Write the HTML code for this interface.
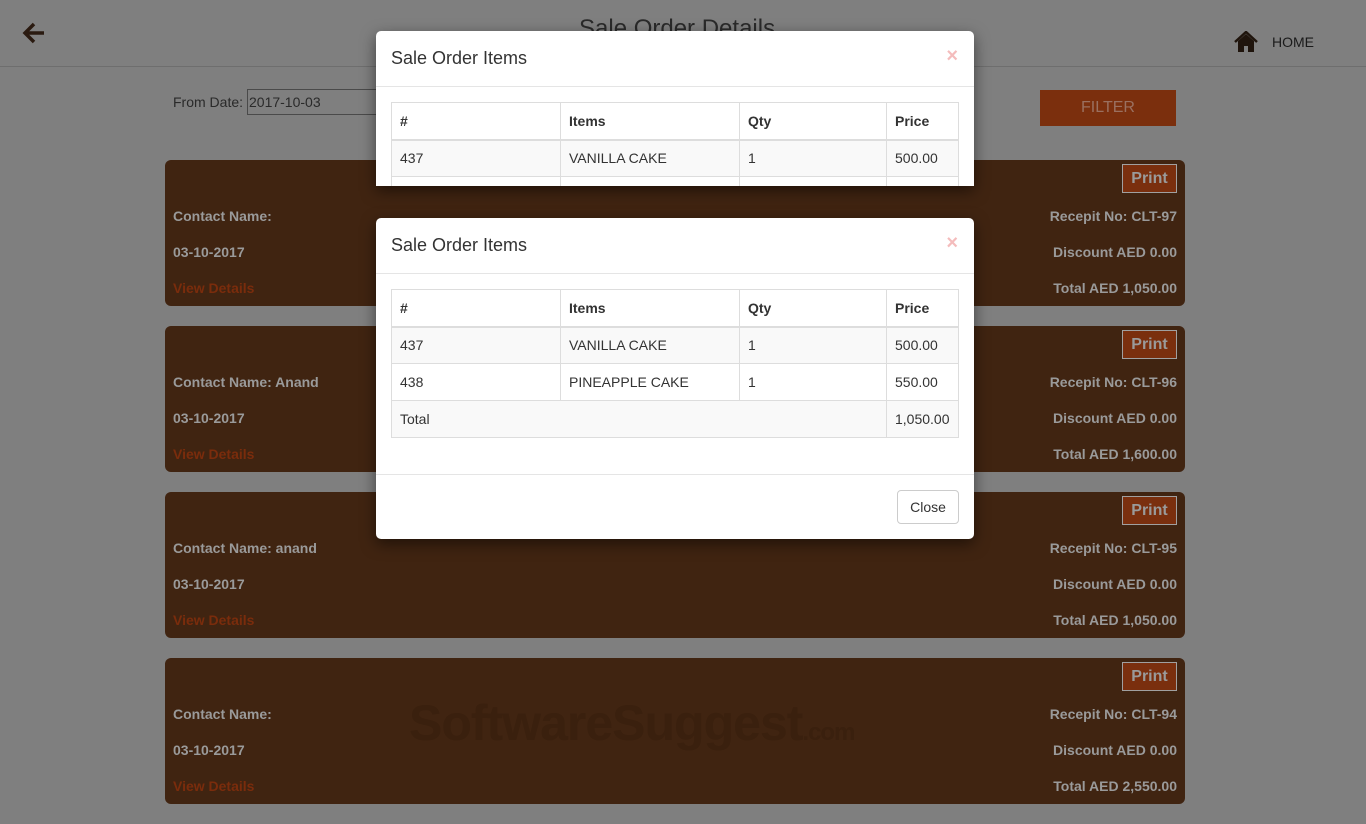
<!DOCTYPE html>
<html><head><style>
*{margin:0;padding:0;box-sizing:border-box}
body{width:1366px;height:824px;overflow:hidden;background:#7f7f7f;font-family:"Liberation Sans",sans-serif;position:relative}
.a{position:absolute}
.card{position:absolute;left:165px;width:1020px;height:146px;background:#402411;border-radius:6px;font-weight:bold;font-size:14px;color:#9a9a9a}
.card .l{position:absolute;left:8px}
.card .r{position:absolute;right:8px}
.card .vd{color:#7a2c0c}
.print{position:absolute;right:8px;top:4px;width:55px;height:29px;background:#7a2f0e;border:1px solid #a0a0a0;color:#9a9a9a;font-size:16px;text-align:center;line-height:27px}
.modal{position:absolute;left:376px;width:598px;background:#fff;border-radius:5px;overflow:hidden;box-shadow:0 5px 15px rgba(0,0,0,.5)}
.mh{height:56px;border-bottom:1px solid #e5e5e5;font-size:18px;color:#333;padding:17px 15px 0;position:relative}
.x{position:absolute;right:16px;top:14px;color:#f4bcbc;font-size:20px;font-weight:bold}
table{border-collapse:collapse;margin:15px 15px 0;width:568px;font-size:14px;color:#333}
td,th{border:1px solid #ddd;height:37px;padding:0 8px;text-align:left}
th{border-bottom:2px solid #ddd;font-weight:bold}
tr.s td{background:#f9f9f9}
</style></head><body>
<svg class="a" style="left:22px;top:22px" width="24" height="22" viewBox="0 0 24 22"><path d="M22 11H4M12 2L3 11l9 9" stroke="#2a1a10" stroke-width="3.5" fill="none"/></svg>
<div class="a" style="left:579px;top:15px;font-size:24px;color:#2a2a2a">Sale Order Details</div>
<svg class="a" style="left:1234px;top:31px" width="24" height="22" viewBox="0 0 24 22"><path d="M1 11L12 1l11 10" stroke="#1f140c" stroke-width="2.5" fill="none"/><path d="M4 10v11h6v-6h4v6h6V10L12 3z" fill="#1f140c"/></svg>
<div class="a" style="left:1272px;top:34px;font-size:14px;color:#1a1a1a">HOME</div>
<div class="a" style="left:0;top:66px;width:1366px;height:1px;background:#6e6e6e"></div>
<div class="a" style="left:173px;top:94px;font-size:14px;color:#2a2a2a">From Date:</div>
<div class="a" style="left:247px;top:89px;width:140px;height:26px;border:1px solid #4a4a4a;font-size:14px;color:#2a2a2a;padding:4px 1px">2017-10-03</div>
<div class="a" style="left:1040px;top:90px;width:136px;height:36px;background:#7b2f0d;color:#9a7060;font-size:16px;text-align:center;line-height:36px">FILTER</div>

<div class="card" style="top:160px"><div class="print">Print</div><div class="l" style="top:48px">Contact Name:</div><div class="l" style="top:84px">03-10-2017</div><div class="l vd" style="top:120px">View Details</div><div class="r" style="top:48px">Recepit No: CLT-97</div><div class="r" style="top:84px">Discount AED 0.00</div><div class="r" style="top:120px">Total AED 1,050.00</div></div>
<div class="card" style="top:326px"><div class="print">Print</div><div class="l" style="top:48px">Contact Name: Anand</div><div class="l" style="top:84px">03-10-2017</div><div class="l vd" style="top:120px">View Details</div><div class="r" style="top:48px">Recepit No: CLT-96</div><div class="r" style="top:84px">Discount AED 0.00</div><div class="r" style="top:120px">Total AED 1,600.00</div></div>
<div class="card" style="top:492px"><div class="print">Print</div><div class="l" style="top:48px">Contact Name: anand</div><div class="l" style="top:84px">03-10-2017</div><div class="l vd" style="top:120px">View Details</div><div class="r" style="top:48px">Recepit No: CLT-95</div><div class="r" style="top:84px">Discount AED 0.00</div><div class="r" style="top:120px">Total AED 1,050.00</div></div>
<div class="card" style="top:658px"><div class="print">Print</div><div class="a" style="left:244px;top:36px;font-size:50px;color:#3a200e;font-weight:bold;letter-spacing:-1px;white-space:nowrap">SoftwareSuggest<span style="font-size:24px">.com</span></div><div class="l" style="top:48px">Contact Name:</div><div class="l" style="top:84px">03-10-2017</div><div class="l vd" style="top:120px">View Details</div><div class="r" style="top:48px">Recepit No: CLT-94</div><div class="r" style="top:84px">Discount AED 0.00</div><div class="r" style="top:120px">Total AED 2,550.00</div></div>

<div class="modal" style="top:31px;height:155px;border-radius:5px 5px 0 0">
<div class="mh">Sale Order Items<span class="x">×</span></div>
<table><tr><th style="width:169px">#</th><th style="width:179px">Items</th><th style="width:147px">Qty</th><th>Price</th></tr>
<tr class="s"><td>437</td><td>VANILLA CAKE</td><td>1</td><td>500.00</td></tr>
<tr><td>438</td><td>PINEAPPLE CAKE</td><td>1</td><td>550.00</td></tr></table>
</div>

<div class="modal" style="top:218px;height:321px">
<div class="mh">Sale Order Items<span class="x">×</span></div>
<table><tr><th style="width:169px">#</th><th style="width:179px">Items</th><th style="width:147px">Qty</th><th>Price</th></tr>
<tr class="s"><td>437</td><td>VANILLA CAKE</td><td>1</td><td>500.00</td></tr>
<tr><td>438</td><td>PINEAPPLE CAKE</td><td>1</td><td>550.00</td></tr>
<tr class="s"><td colspan="3">Total</td><td>1,050.00</td></tr></table>
<div class="a" style="left:0;top:256px;width:598px;height:1px;background:#e5e5e5"></div>
<div class="a" style="left:521px;top:272px;width:62px;height:34px;border:1px solid #ccc;border-radius:4px;font-size:14px;color:#333;text-align:center;line-height:32px">Close</div>
</div>
</body></html>
